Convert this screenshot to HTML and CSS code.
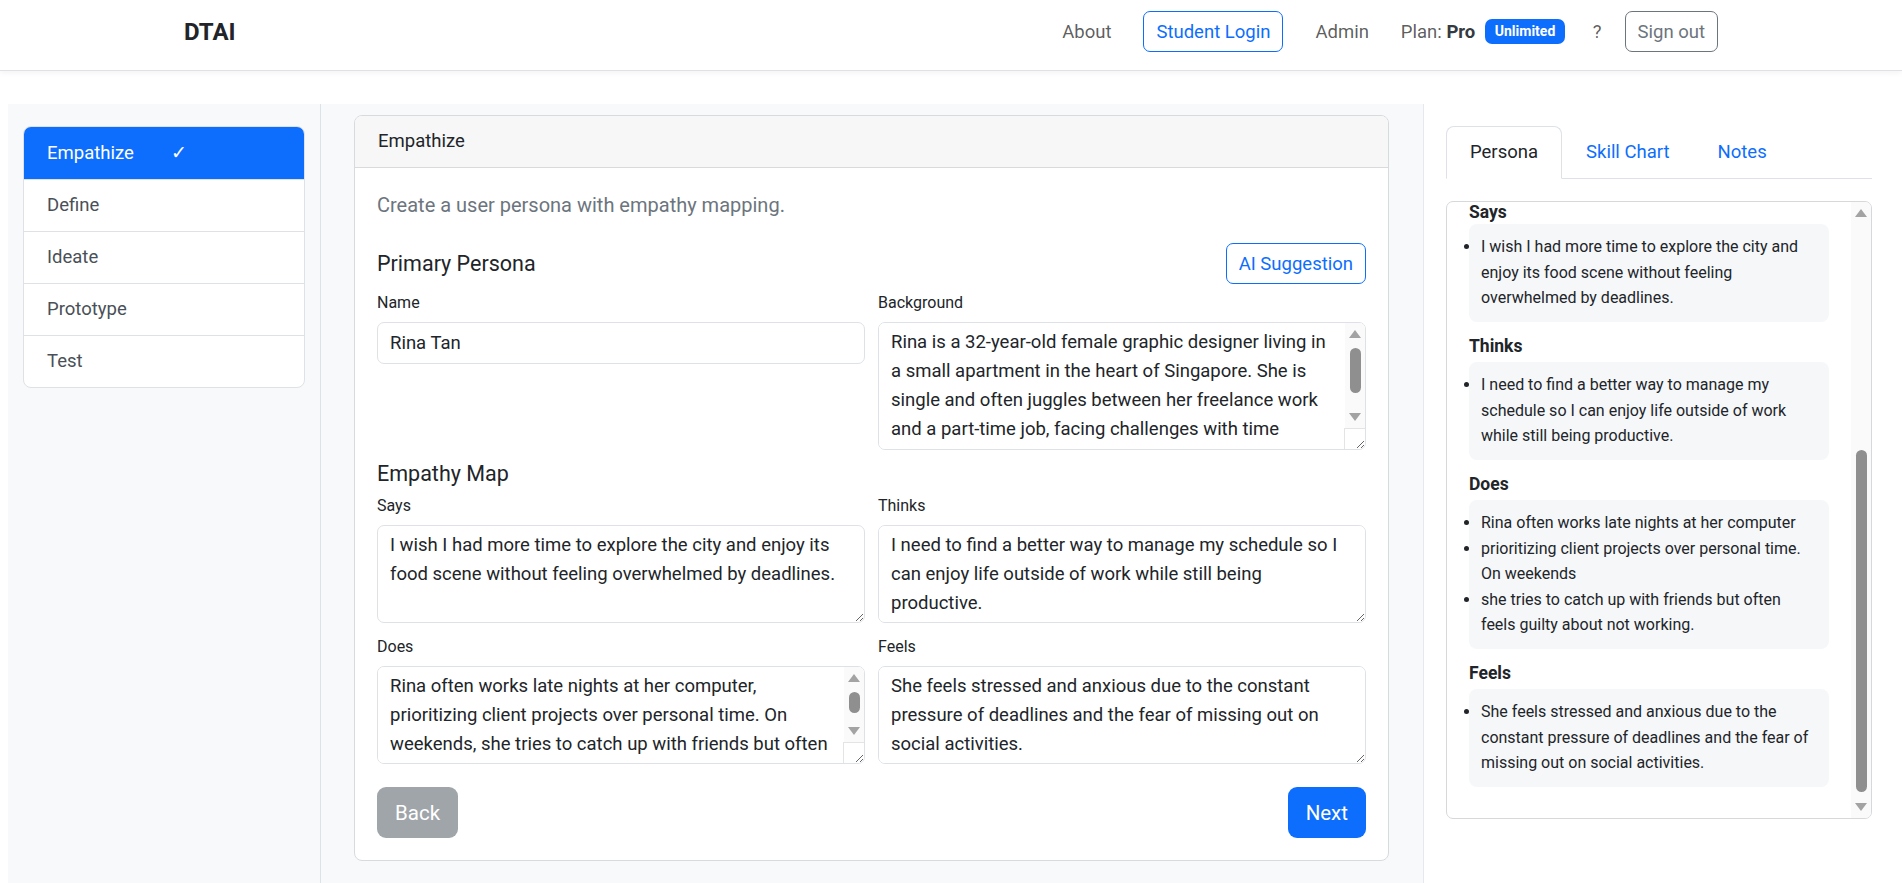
FILE: index.html
```html
<!DOCTYPE html>
<html lang="en">
<head>
<meta charset="utf-8">
<title>DTAI</title>
<link rel="stylesheet" href="styles.css">
</head>
<body>
<nav class="navbar">
  <div class="nav-inner">
    <div class="brand">DTAI</div>
    <div class="nav-right">
      <a class="nav-link">About</a>
      <a class="btn btn-outline-primary">Student Login</a>
      <a class="nav-link">Admin</a>
      <div class="plan-group">
        <span class="plan">Plan:&nbsp;<b>Pro</b></span>
        <span class="badge">Unlimited</span>
      </div>
      <a class="nav-link help">?</a>
      <a class="btn btn-outline-secondary">Sign out</a>
    </div>
  </div>
</nav>

<div class="main">
  <aside class="sidebar">
    <div class="list">
      <div class="item active">Empathize<span class="check">✓</span></div>
      <div class="item">Define</div>
      <div class="item">Ideate</div>
      <div class="item">Prototype</div>
      <div class="item">Test</div>
    </div>
  </aside>

  <section class="center">
    <div class="card">
      <div class="card-header">Empathize</div>
      <div class="card-body">
        <p class="lead">Create a user persona with empathy mapping.</p>
        <div class="section-head">
          <h5 class="title">Primary Persona</h5>
          <a class="btn btn-outline-primary">AI Suggestion</a>
        </div>
        <div class="grid row1">
          <div class="field">
            <label>Name</label>
            <input class="control" type="text" value="Rina Tan">
          </div>
          <div class="field">
            <label>Background</label>
            <div class="ta-wrap">
              <textarea class="control tall has-bar">Rina is a 32-year-old female graphic designer living in a small apartment in the heart of Singapore. She is single and often juggles between her freelance work and a part-time job, facing challenges with time management and maintaining a healthy work-life balance.</textarea>
              <div class="vscroll vs-bg"><span class="up"></span><span class="thumb"></span><span class="down"></span></div>
              <div class="corner"></div>
            </div>
          </div>
        </div>
        <h5 class="title map-title">Empathy Map</h5>
        <div class="grid">
          <div class="field">
            <label>Says</label>
            <textarea class="control short">I wish I had more time to explore the city and enjoy its food scene without feeling overwhelmed by deadlines.</textarea>
          </div>
          <div class="field">
            <label>Thinks</label>
            <textarea class="control short">I need to find a better way to manage my schedule so I can enjoy life outside of work while still being productive.</textarea>
          </div>
        </div>
        <div class="grid row3">
          <div class="field">
            <label>Does</label>
            <div class="ta-wrap">
              <textarea class="control short has-bar">Rina often works late nights at her computer, prioritizing client projects over personal time. On weekends, she tries to catch up with friends but often feels guilty about not working.</textarea>
              <div class="vscroll vs-does"><span class="up"></span><span class="thumb"></span><span class="down"></span></div>
              <div class="corner"></div>
            </div>
          </div>
          <div class="field">
            <label>Feels</label>
            <textarea class="control short">She feels stressed and anxious due to the constant pressure of deadlines and the fear of missing out on social activities.</textarea>
          </div>
        </div>
        <div class="actions">
          <a class="btn-lg btn-back">Back</a>
          <a class="btn-lg btn-next">Next</a>
        </div>
      </div>
    </div>
  </section>

  <aside class="right">
    <div class="tabs">
      <a class="tab active">Persona</a>
      <a class="tab">Skill Chart</a>
      <a class="tab">Notes</a>
    </div>
    <div class="preview-box">
      <div class="preview">
        <h6 class="p-head">Says</h6>
        <ul class="p-list"><li>I wish I had more time to explore the city and enjoy its food scene without feeling overwhelmed by deadlines.</li></ul>
        <h6 class="p-head">Thinks</h6>
        <ul class="p-list"><li>I need to find a better way to manage my schedule so I can enjoy life outside of work while still being productive.</li></ul>
        <h6 class="p-head">Does</h6>
        <ul class="p-list">
          <li>Rina often works late nights at her computer</li>
          <li>prioritizing client projects over personal time. On weekends</li>
          <li>she tries to catch up with friends but often feels guilty about not working.</li>
        </ul>
        <h6 class="p-head">Feels</h6>
        <ul class="p-list"><li>She feels stressed and anxious due to the constant pressure of deadlines and the fear of missing out on social activities.</li></ul>
      </div>
      <div class="vscroll vs-preview"><span class="up"></span><span class="thumb"></span><span class="down"></span></div>
    </div>
  </aside>
</div>
</body>
</html>
```

FILE: styles.css
```css
* { box-sizing: border-box; }

body {
  margin: 0;
  height: 883px;
  overflow: hidden;
  background: #fff;
  color: #212529;
  font-family: Roboto, "Liberation Sans", Arial, sans-serif;
}

a { text-decoration: none; cursor: pointer; }

/* ---------- navbar ---------- */
.navbar {
  height: 71px;
  background: #fff;
  border-bottom: 1px solid #dee2e6;
  box-shadow: 0 2px 6px rgba(0, 0, 0, 0.05);
  position: relative;
  z-index: 1;
  padding-top: 11px;
}

.nav-inner {
  width: 1534px;
  margin: 0 auto;
  height: 41px;
  display: flex;
  align-items: center;
  justify-content: space-between;
}

.brand {
  font-size: 24px;
  font-weight: 700;
  color: #212529;
}

.nav-right {
  display: flex;
  align-items: center;
  gap: 32px;
  font-size: 18.5px;
}

.nav-link { color: rgba(0, 0, 0, 0.65); }

.help { margin: 0 -9px 0 -4px; }

.plan-group {
  display: flex;
  align-items: center;
  gap: 10px;
}

.plan { color: rgba(0, 0, 0, 0.65); }

.plan b {
  color: #343a40;
  font-weight: 700;
}

.badge {
  background: #0d6efd;
  color: #fff;
  font-size: 14px;
  font-weight: 700;
  height: 25px;
  line-height: 25px;
  padding: 0 9.5px;
  border-radius: 7px;
}

.btn {
  display: inline-flex;
  align-items: center;
  height: 41px;
  padding: 0 12px;
  border: 1px solid;
  border-radius: 7px;
  font-size: 18.5px;
  background: #fff;
}

.btn-outline-primary { color: #0d6efd; border-color: #0d6efd; }
.btn-outline-secondary { color: #6c757d; border-color: #6c757d; }

/* ---------- layout ---------- */
.main {
  display: flex;
  height: 779px;
  margin-top: 33px;
  padding: 0 8px;
}

.sidebar {
  width: 313px;
  flex: none;
  background: #f8f9fa;
  border-right: 1px solid #dee2e6;
  padding: 22px 15px;
}

.list {
  background: #fff;
  border: 1px solid #dee2e6;
  border-radius: 8px;
  overflow: hidden;
}

.item {
  padding: 12px 23px;
  font-size: 18.5px;
  line-height: 27px;
  color: #495057;
  border-top: 1px solid #dee2e6;
}

.item:first-child { border-top: 0; }

.item.active {
  background: #0d6efd;
  color: #fff;
}

.check {
  margin-left: 37px;
  font-size: 19px;
}

.center {
  flex: 1;
  background: #f8f9fa;
  padding: 11px 34px 0 33px;
}

.card {
  background: #fff;
  border: 1px solid #d8dbde;
  border-radius: 8px;
  overflow: hidden;
}

.card-header {
  background: #f7f7f7;
  border-bottom: 1px solid #d8dbde;
  padding: 12px 23px;
  font-size: 18.5px;
  line-height: 27px;
}

.card-body { padding: 22px; }

.lead {
  margin: 0 0 23px;
  font-size: 20px;
  line-height: 30px;
  color: #6c757d;
}

.section-head {
  display: flex;
  align-items: center;
  justify-content: space-between;
  height: 41px;
}

.title {
  margin: 0;
  font-size: 21.5px;
  line-height: 25px;
  font-weight: 400;
  color: #212529;
}

.map-title { margin: 11px 0 8px; }

.grid {
  display: grid;
  grid-template-columns: 1fr 1fr;
  column-gap: 13px;
}

.row1 { margin-top: 7px; }
.row3 { margin-top: 12px; }

.field label {
  display: block;
  font-size: 16px;
  line-height: 24px;
  margin-bottom: 7px;
  color: #212529;
}

.control {
  display: block;
  width: 100%;
  border: 1px solid #dee2e6;
  border-radius: 7px;
  background: #fff;
  color: #212529;
  font-family: Roboto, "Liberation Sans", Arial, sans-serif;
  font-size: 18.5px;
  padding: 0 12px;
  outline: none;
}

input.control { height: 42px; }

textarea.control {
  line-height: 29px;
  padding: 5px 11px 5px 12px;
  resize: vertical;
}

textarea.has-bar { padding-right: 33px; }

.tall { height: 128px; }
.short { height: 98px; }

/* drawn scrollbars (over the scrolling boxes) */
.ta-wrap { position: relative; }

.vscroll {
  position: absolute;
  top: 1px;
  right: 1px;
  width: 20px;
  background: #fafafa;
}

.vscroll .up,
.vscroll .down {
  position: absolute;
  left: 4px;
  width: 0;
  height: 0;
  border-left: 6px solid transparent;
  border-right: 6px solid transparent;
}

.vscroll .up {
  top: 7px;
  border-bottom: 8px solid #a3a3a3;
}

.vscroll .down {
  bottom: 7px;
  border-top: 8px solid #a3a3a3;
}

.vscroll .thumb {
  position: absolute;
  left: 4.5px;
  width: 11px;
  border-radius: 6px;
  background: #8f8f8f;
}

.vs-bg { bottom: 22px; border-top-right-radius: 6px; }
.vs-bg .thumb { top: 25px; height: 45px; }

.vs-does { bottom: 22px; border-top-right-radius: 6px; }
.vs-does .thumb { top: 25px; height: 21px; }

.corner {
  position: absolute;
  right: 1px;
  bottom: 1px;
  width: 21px;
  height: 21px;
  border-top: 1px solid #e4e4e4;
  border-left: 1px solid #e4e4e4;
  border-bottom-right-radius: 6px;
}

.actions {
  display: flex;
  justify-content: space-between;
  margin-top: 23px;
}

.btn-lg {
  display: inline-flex;
  align-items: center;
  height: 51px;
  padding: 0 18px;
  border-radius: 9px;
  font-size: 20.5px;
  color: #fff;
}

.btn-back { background: #a0a5aa; }
.btn-next { background: #0d6efd; }

/* ---------- right panel ---------- */
.right {
  width: 471px;
  flex: none;
  background: #fff;
  border-left: 1px solid #e6e8eb;
  padding: 22px 22px 0;
}

.tabs {
  display: flex;
  border-bottom: 1px solid #dee2e6;
}

.tab {
  padding: 12px 23px;
  font-size: 18.5px;
  line-height: 27px;
  color: #0d6efd;
  border: 1px solid transparent;
  border-radius: 8px 8px 0 0;
  margin-bottom: -1px;
}

.tab.active {
  color: #212529;
  background: #fff;
  border-color: #dee2e6 #dee2e6 #fff;
}

.preview-box {
  position: relative;
  margin-top: 22px;
  height: 618px;
  border: 1px solid #d6d9dc;
  border-radius: 7px;
  overflow: hidden;
}

.preview {
  height: 100%;
  overflow: hidden;
  padding: 0 42px 0 22px;
}

.vs-preview { top: 0; right: 0; bottom: 0; }
.vs-preview .thumb { top: 248px; height: 342px; }

.p-head {
  margin: 0 0 5px;
  font-size: 17.5px;
  line-height: 21px;
  font-weight: 700;
  color: #212529;
}

.p-head:first-child { margin-bottom: 1px; }

.p-list {
  margin: 0 0 14px;
  padding: 10px 12px 11.5px;
  background: #f6f7f9;
  border-radius: 8px;
  font-size: 16px;
  line-height: 25.5px;
  color: #212529;
}
```
